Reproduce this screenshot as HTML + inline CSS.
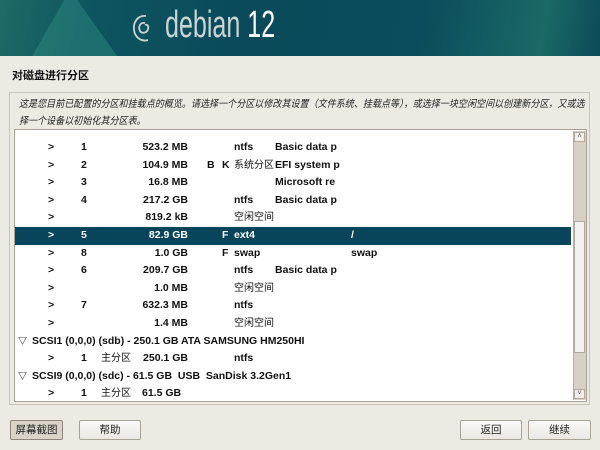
<!DOCTYPE html><html><head><meta charset="utf-8"><style>
body{margin:0;width:600px;height:450px;background:#edeae4;font-family:"Liberation Sans","Noto Sans CJK SC",sans-serif;overflow:hidden;position:relative}
.hdr{position:absolute;left:0;top:0;width:600px;height:56px;background:linear-gradient(100deg,#1f6b66 0%,#0d5560 15%,#0a4a5a 40%,#0b4d5c 70%,#1a6a66 90%,#0c4a58 100%);overflow:hidden}
.hdr .tri{position:absolute;left:30px;top:-10px;width:0;height:0;border-left:40px solid transparent;border-right:50px solid transparent;border-bottom:70px solid rgba(60,160,140,.35)}
.logo{position:absolute;left:165px;top:4px;color:#c9d4d6;font-size:38px;white-space:nowrap;transform:scaleX(0.66);transform-origin:0 0}
.logo b{font-weight:normal;color:#fff}
.ttl{position:absolute;left:12px;top:67px;font-size:11px;font-weight:bold;color:#111}
.box{position:absolute;left:9px;top:92px;width:581px;height:313px;border:1px solid #c9c3b8;box-sizing:border-box}
.desc{position:absolute;left:19px;top:96px;font-size:10px;line-height:17px;color:#222;font-style:italic;white-space:nowrap;transform:scaleX(0.905);transform-origin:0 0}
.list{position:absolute;left:14px;top:129px;width:573px;height:273px;background:#fff;border:1px solid #a8a296;box-sizing:border-box;overflow:hidden}
.row{position:absolute;left:0;height:17.6px;width:556px;font-size:10.5px;font-weight:bold;color:#111;line-height:17.6px}
.row span{position:absolute;white-space:nowrap}
.sel{background:#08445a;color:#fff}
.n{font-weight:normal;font-size:10px}
.sb{position:absolute;left:558px;top:1px;width:12px;height:269px;background:#d6d0c6;border-left:1px solid #b7b0a4}
.th{position:absolute;left:0;top:90px;width:11px;height:132px;background:#f4f2ee;border:1px solid #b0a99c;box-sizing:border-box}
.ar{position:absolute;left:0;width:11px;height:10px;background:#f2efea;border:1px solid #b0a99c;box-sizing:border-box;font-size:7px;text-align:center;line-height:8px;color:#444}
.btn{position:absolute;top:420px;height:20px;border:1px solid #a9a397;border-radius:2px;background:linear-gradient(#fbfaf8,#ebe8e2);box-sizing:border-box;font-size:10.5px;text-align:center;line-height:18px;color:#222}
</style></head><body>
<div class="hdr"><div class="tri"></div>
<svg style="position:absolute;left:132px;top:12px" width="22" height="32" viewBox="0 0 22 32"><path d="M14 4 C6 3 1 10 2 18 C3 26 10 30 16 28 M13 11 C8 10 6 15 8 19 C10 22 15 21 16 17 C17 14 15 12 13 13" fill="none" stroke="#c9d4d6" stroke-width="1.8"/></svg>
<div class="logo">debian <b>12</b></div></div>
<div class="ttl">对磁盘进行分区</div>
<div class="box"></div>
<div class="desc">这是您目前已配置的分区和挂载点的概览。请选择一个分区以修改其设置（文件系统、挂载点等），或选择一块空闲空间以创建新分区，又或选<br>择一个设备以初始化其分区表。</div>
<div class="list">
<div class="row" style="top:9px"><span style="left:33px">&gt;</span><span style="left:66px">1</span><span style="right:383px">523.2 MB</span><span style="left:219px">ntfs</span><span style="left:260px">Basic data p</span></div>
<div class="row" style="top:26.6px"><span style="left:33px">&gt;</span><span style="left:66px">2</span><span style="right:383px">104.9 MB</span><span style="left:192px">B</span><span style="left:207px">K</span><span class="n" style="left:219px">系统分区</span><span style="left:260px">EFI system p</span></div>
<div class="row" style="top:44.2px"><span style="left:33px">&gt;</span><span style="left:66px">3</span><span style="right:383px">16.8 MB</span><span style="left:260px">Microsoft re</span></div>
<div class="row" style="top:61.8px"><span style="left:33px">&gt;</span><span style="left:66px">4</span><span style="right:383px">217.2 GB</span><span style="left:219px">ntfs</span><span style="left:260px">Basic data p</span></div>
<div class="row" style="top:79.4px"><span style="left:33px">&gt;</span><span style="right:383px">819.2 kB</span><span class="n" style="left:219px">空闲空间</span></div>
<div class="row sel" style="top:97px"><span style="left:33px">&gt;</span><span style="left:66px">5</span><span style="right:383px">82.9 GB</span><span style="left:207px">F</span><span style="left:219px">ext4</span><span style="left:336px">/</span></div>
<div class="row" style="top:114.6px"><span style="left:33px">&gt;</span><span style="left:66px">8</span><span style="right:383px">1.0 GB</span><span style="left:207px">F</span><span style="left:219px">swap</span><span style="left:336px">swap</span></div>
<div class="row" style="top:132.2px"><span style="left:33px">&gt;</span><span style="left:66px">6</span><span style="right:383px">209.7 GB</span><span style="left:219px">ntfs</span><span style="left:260px">Basic data p</span></div>
<div class="row" style="top:149.8px"><span style="left:33px">&gt;</span><span style="right:383px">1.0 MB</span><span class="n" style="left:219px">空闲空间</span></div>
<div class="row" style="top:167.4px"><span style="left:33px">&gt;</span><span style="left:66px">7</span><span style="right:383px">632.3 MB</span><span style="left:219px">ntfs</span></div>
<div class="row" style="top:185px"><span style="left:33px">&gt;</span><span style="right:383px">1.4 MB</span><span class="n" style="left:219px">空闲空间</span></div>
<div class="row" style="top:202.6px"><span style="left:3px;font-size:9px">▽</span><span style="left:17px">SCSI1 (0,0,0) (sdb) - 250.1 GB ATA SAMSUNG HM250HI</span></div>
<div class="row" style="top:220.2px"><span style="left:33px">&gt;</span><span style="left:66px">1</span><span class="n" style="left:86px">主分区</span><span style="right:383px">250.1 GB</span><span style="left:219px">ntfs</span></div>
<div class="row" style="top:237.8px"><span style="left:3px;font-size:9px">▽</span><span style="left:17px">SCSI9 (0,0,0) (sdc) - 61.5 GB &nbsp;USB &nbsp;SanDisk 3.2Gen1</span></div>
<div class="row" style="top:255.4px"><span style="left:33px">&gt;</span><span style="left:66px">1</span><span class="n" style="left:86px">主分区</span><span style="left:127px">61.5 GB</span></div>
<div class="sb"><div class="ar" style="top:1px">˄</div><div class="th"></div><div class="ar" style="bottom:1px">˅</div></div>
</div>
<div class="btn" style="left:10px;width:53px;background:#d9d3c8;border-color:#8d877b">屏幕截图</div>
<div class="btn" style="left:79px;width:62px">帮助</div>
<div class="btn" style="left:460px;width:62px">返回</div>
<div class="btn" style="left:528px;width:63px">继续</div>
</body></html>
